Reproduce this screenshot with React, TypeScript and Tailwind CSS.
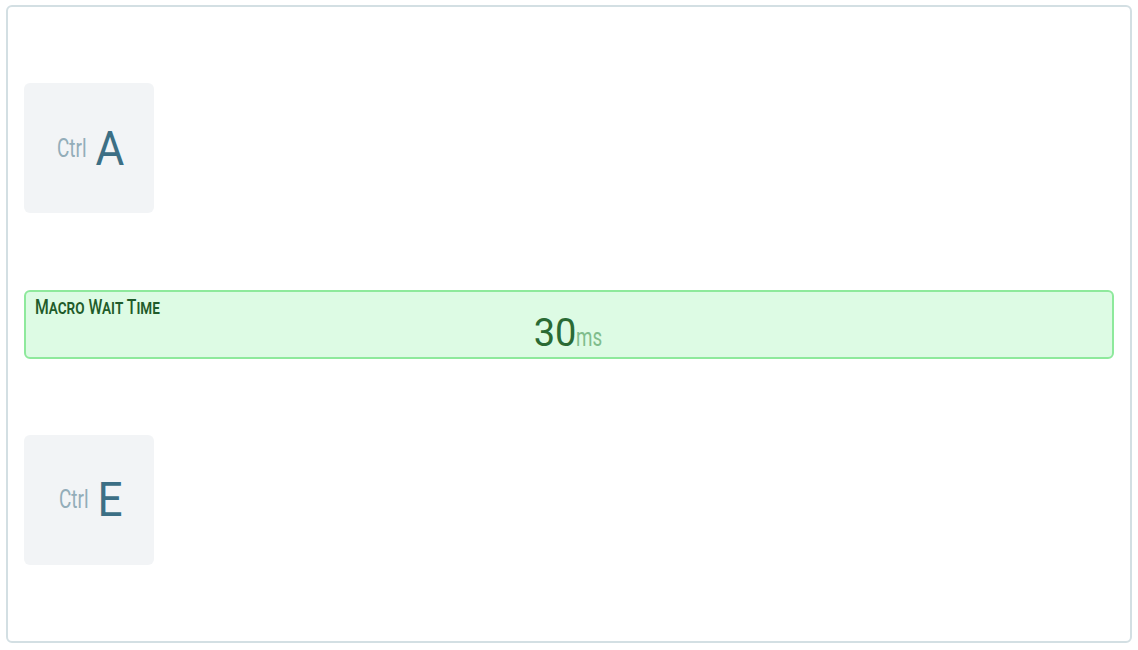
export default function App() {
  return (
    <div className="w-[1138px] h-[650px] px-[6px] pt-[5px] pb-[7px] bg-white">
      <div className="h-full border-2 border-[#d3dfe3] rounded-md px-4 flex flex-col justify-evenly">
        <KeyBox letter="A" />
        <div className="h-[69px] border-2 border-[#8ee99c] bg-[#ddfbe4] rounded-md px-[9px] pt-[5px] flex flex-col">
          <div
            className="text-[21px] leading-[20px] text-[#1f5b2a] font-medium origin-left scale-x-[0.75] whitespace-nowrap"
            style={{ fontFamily: 'Roboto, sans-serif', fontVariant: 'small-caps' }}
          >
            Macro Wait Time
          </div>
          <div className="flex justify-center items-baseline -mt-[5px]">
            <span className="text-[38px] leading-[42px] text-[#2a6a34]" style={{ fontFamily: 'Roboto, sans-serif' }}>30</span>
            <span
              className="text-[25px] text-[#80bd8c] inline-block origin-left scale-x-[0.75] w-[28px]"
              style={{ fontFamily: 'Roboto, sans-serif' }}
            >
              ms
            </span>
          </div>
        </div>
        <KeyBox letter="E" />
      </div>
    </div>
  )
}

function KeyBox({ letter }: { letter: string }) {
  return (
    <div className="w-[130px] h-[130px] bg-[#f2f4f6] rounded-md flex items-center justify-center gap-[6px] pl-[4px]" style={{ fontFamily: 'Roboto, sans-serif' }}>
      <span className="text-[25px] text-[#93adb9] inline-block origin-left scale-x-[0.76] w-[31px] whitespace-nowrap">Ctrl</span>
      <span className="text-[49px] leading-none text-[#3c6f85] inline-block scale-x-[0.9]">{letter}</span>
    </div>
  )
}
